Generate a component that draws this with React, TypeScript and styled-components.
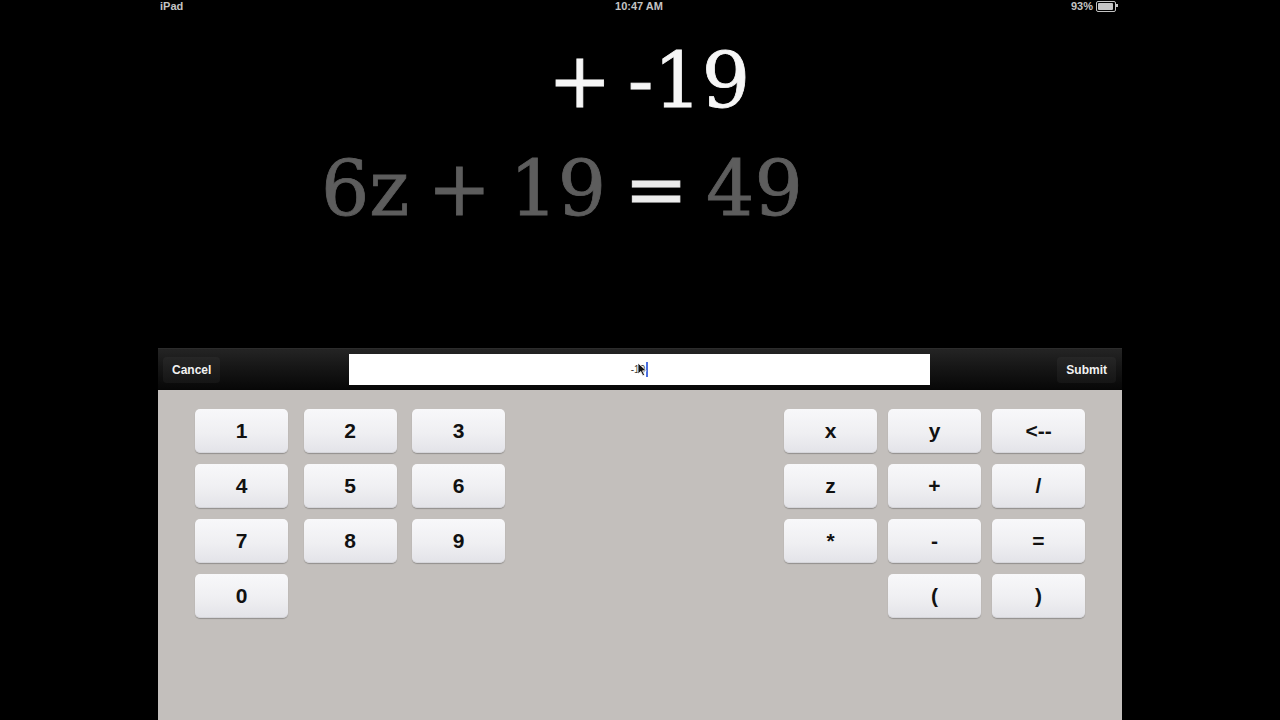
import React from 'react';
import styled, { createGlobalStyle } from 'styled-components';

const GlobalStyle = createGlobalStyle`
  html, body {
    margin: 0;
    padding: 0;
    background: #000;
  }
  body {
    font-family: "Liberation Sans", Arial, sans-serif;
  }
`;

const Screen = styled.div`
  width: 964px;
  height: 720px;
  margin-left: 158px;
  display: flex;
  flex-direction: column;
  background: #000;
  overflow: hidden;
`;

const StatusBar = styled.div`
  height: 13px;
  flex-shrink: 0;
  display: grid;
  grid-template-columns: 1fr auto 1fr;
  align-items: center;
  padding: 0 4px 0 2px;
  color: #c4c4c4;
  font-size: 11px;
  font-weight: bold;
  line-height: 11px;
`;

const StatusRight = styled.div`
  display: flex;
  justify-content: flex-end;
  align-items: center;
  gap: 3px;
`;

const Battery = styled.div`
  position: relative;
  width: 16px;
  height: 7px;
  border: 1px solid #c4c4c4;
  border-radius: 2px;
  padding: 1px;
  margin-right: 2px;
  &::before {
    content: '';
    display: block;
    width: 93%;
    height: 100%;
    background: #c4c4c4;
    border-radius: 1px;
  }
  &::after {
    content: '';
    position: absolute;
    right: -3px;
    top: 2px;
    width: 2px;
    height: 3px;
    background: #c4c4c4;
  }
`;

const Display = styled.div`
  height: 335px;
  flex-shrink: 0;
  box-sizing: border-box;
  display: flex;
  flex-direction: column;
  padding-top: 30px;
  font-family: "DejaVu Serif", "Liberation Serif", serif;
  font-size: 76px;
  line-height: 76px;
  -webkit-text-stroke: 0.8px currentColor;
`;

const StepLine = styled.div`
  padding-left: 390px;
  color: #f6f6f6;
  white-space: pre;
  word-spacing: -8px;
`;

const EquationLine = styled.div`
  margin-top: 32px;
  padding-left: 163px;
  color: #5d5d5d;
  white-space: pre;
  word-spacing: -6px;
`;

const Equals = styled.span`
  color: #ececec;
`;

const Toolbar = styled.div`
  height: 42px;
  flex-shrink: 0;
  box-sizing: border-box;
  display: grid;
  grid-template-columns: 1fr 581px 1fr;
  align-items: center;
  padding: 0 6px 0 5px;
  border-top: 1px solid #2c2c2c;
  background: linear-gradient(#242424 0%, #161616 45%, #070707 100%);
`;

const BarButton = styled.button<{ $side: 'left' | 'right' }>`
  justify-self: ${(p) => (p.$side === 'left' ? 'start' : 'end')};
  height: 26px;
  padding: 0 9px;
  border: none;
  border-radius: 4px;
  background: linear-gradient(#262626, #151515);
  color: #f2f2f2;
  font-family: "Liberation Sans", Arial, sans-serif;
  font-size: 12px;
  font-weight: bold;
  margin-top: 1px;
`;

const InputField = styled.div`
  position: relative;
  height: 31px;
  background: #fff;
  display: flex;
  align-items: center;
  justify-content: center;
  font-size: 10px;
  color: #333;
`;

const Caret = styled.span`
  display: inline-block;
  width: 2px;
  height: 15px;
  margin-left: 1px;
  background: #4a6ee0;
`;

const Pointer = styled.svg`
  position: absolute;
  left: 288px;
  top: 8px;
`;

const Keypad = styled.div`
  flex: 1;
  background: #c3bfbc;
  display: flex;
  justify-content: space-between;
  align-items: flex-start;
  padding: 19px 37px 0 37px;
`;

const KeyGrid = styled.div<{ $gap: number }>`
  display: grid;
  grid-template-columns: repeat(3, 93px);
  grid-auto-rows: 44px;
  column-gap: ${(p) => p.$gap}px;
  row-gap: 11px;
`;

const Key = styled.button`
  border: none;
  border-radius: 5px;
  background: linear-gradient(#f8f8fa 0%, #efeff2 55%, #e3e3e8 100%);
  box-shadow: 0 1px 1px rgba(0, 0, 0, 0.25), inset 0 -1px 0 rgba(0, 0, 0, 0.06);
  color: #111;
  font-family: "Liberation Sans", Arial, sans-serif;
  font-size: 21px;
  font-weight: bold;
  padding: 0;
`;

const Blank = styled.div``;

const leftKeys = ['1', '2', '3', '4', '5', '6', '7', '8', '9', '0'];
const rightKeys = ['x', 'y', '<--', 'z', '+', '/', '*', '-', '=', '', '(', ')'];

const App: React.FC = () => {
  return (
    <>
      <GlobalStyle />
      <Screen>
        <StatusBar>
          <span>iPad</span>
          <span>10:47 AM</span>
          <StatusRight>
            <span>93%</span>
            <Battery />
          </StatusRight>
        </StatusBar>
        <Display>
          <StepLine>+ -19</StepLine>
          <EquationLine>
            6z + 19 <Equals>=</Equals> 49
          </EquationLine>
        </Display>
        <Toolbar>
          <BarButton $side="left">Cancel</BarButton>
          <InputField>
            <span>-19</span>
            <Caret />
            <Pointer width="11" height="15" viewBox="0 0 11 15">
              <path d="M1 1 L1 12 L3.8 9.4 L5.8 13.8 L7.6 13 L5.6 8.8 L9.4 8.8 Z" fill="#111" stroke="#fff" strokeWidth="0.8" />
            </Pointer>
          </InputField>
          <BarButton $side="right">Submit</BarButton>
        </Toolbar>
        <Keypad>
          <KeyGrid $gap={15.5}>
            {leftKeys.map((k) => (
              <Key key={k}>{k}</Key>
            ))}
          </KeyGrid>
          <KeyGrid $gap={11}>
            {rightKeys.map((k, i) => (k ? <Key key={k}>{k}</Key> : <Blank key={`blank-${i}`} />))}
          </KeyGrid>
        </Keypad>
      </Screen>
    </>
  );
};

export default App;
